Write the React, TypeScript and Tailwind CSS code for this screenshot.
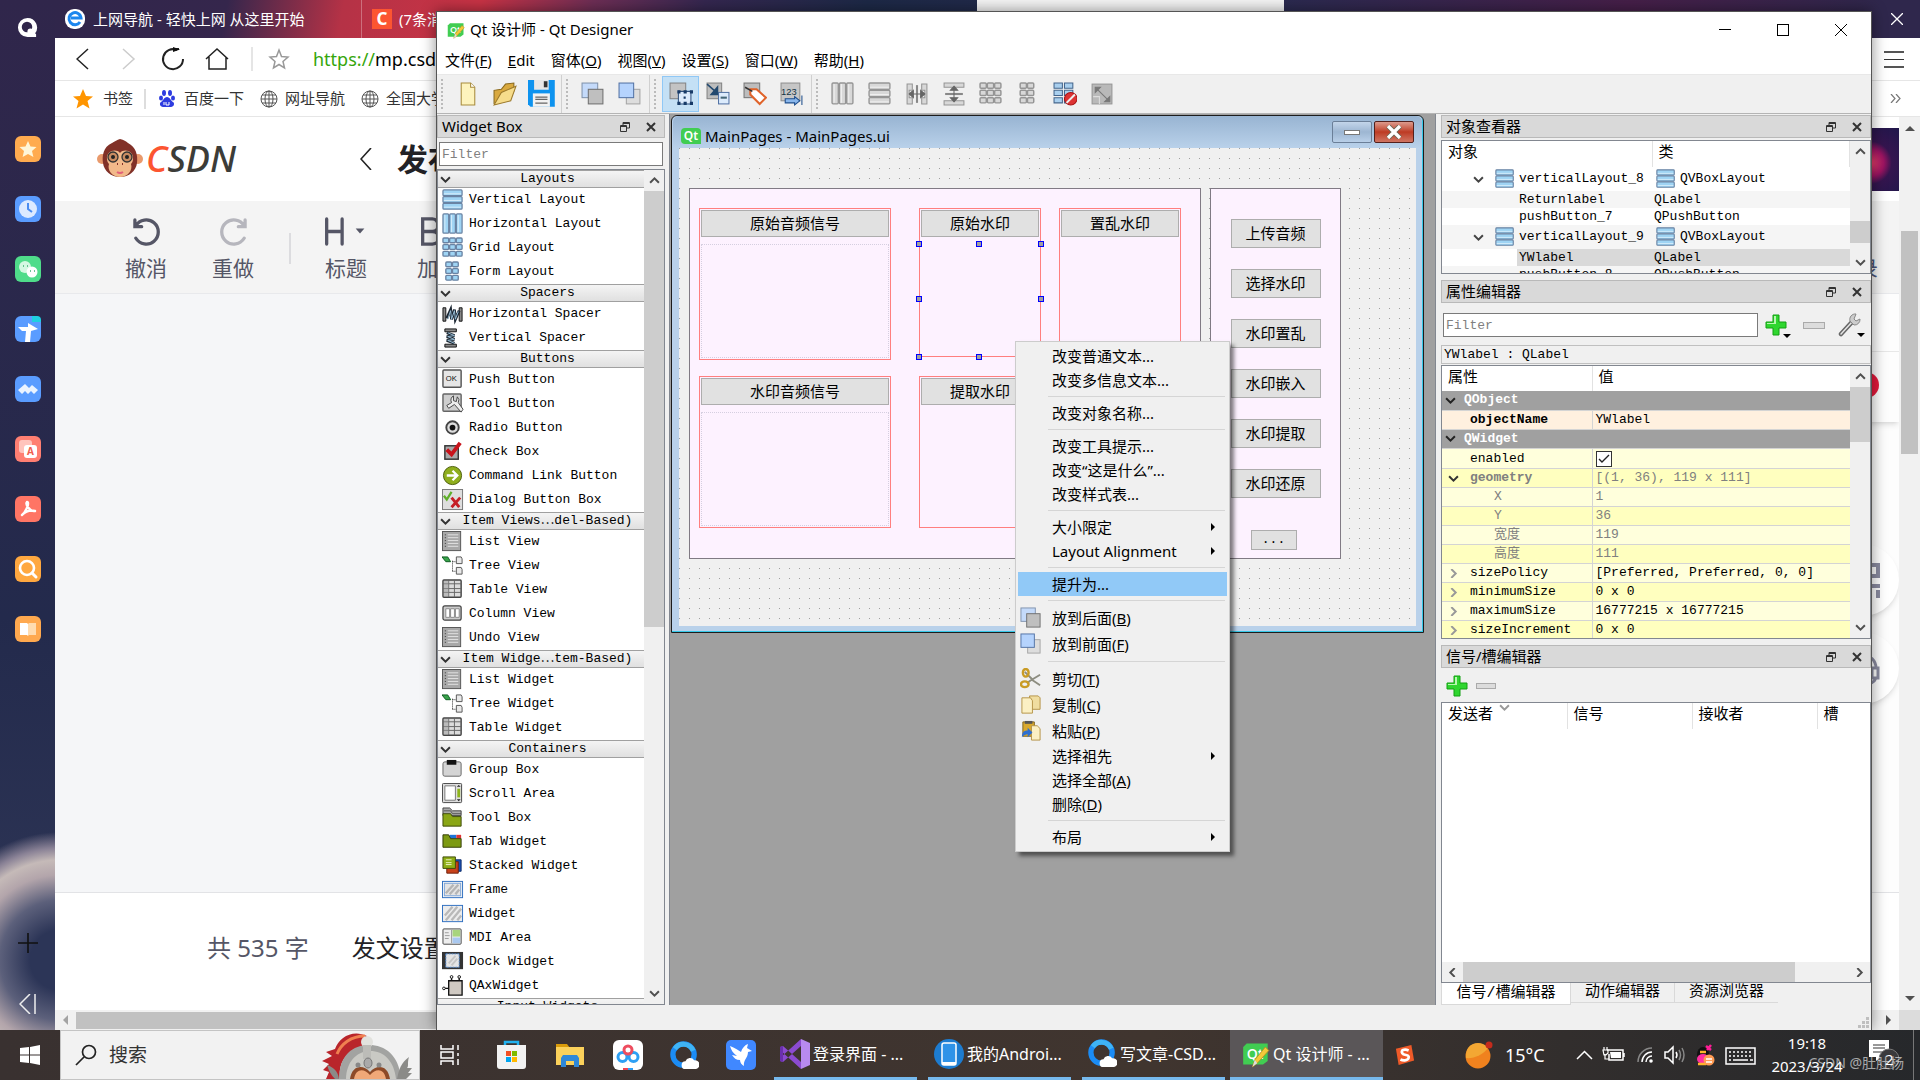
import { type ReactNode } from "react";

const CHEVRON_DOWN = "M1 2 L5 6 L9 2";

interface MenuEntry {
  label: string;
  hotkey?: string;
  icon?: string;
  submenu?: boolean;
  active?: boolean;
}

const contextMenu: MenuEntry[][] = [
  [{ label: "改变普通文本..." }, { label: "改变多信息文本..." }],
  [{ label: "改变对象名称..." }],
  [{ label: "改变工具提示..." }, { label: "改变“这是什么”..." }, { label: "改变样式表..." }],
  [
    { label: "大小限定", submenu: true },
    { label: "Layout Alignment", submenu: true },
  ],
  [{ label: "提升为...", active: true }],
  [
    { label: "放到后面", hotkey: "B", icon: "back" },
    { label: "放到前面", hotkey: "F", icon: "front" },
  ],
  [
    { label: "剪切", hotkey: "T", icon: "cut" },
    { label: "复制", hotkey: "C", icon: "copy" },
    { label: "粘贴", hotkey: "P", icon: "paste" },
    { label: "选择祖先", submenu: true },
    { label: "选择全部", hotkey: "A" },
    { label: "删除", hotkey: "D" },
  ],
  [{ label: "布局", submenu: true }],
];

const widgetGroups = [
  {
    title: "Layouts",
    items: [
      ["vbox", "Vertical Layout"],
      ["hbox", "Horizontal Layout"],
      ["grid", "Grid Layout"],
      ["form", "Form Layout"],
    ],
  },
  {
    title: "Spacers",
    items: [
      ["hspacer", "Horizontal Spacer"],
      ["vspacer", "Vertical Spacer"],
    ],
  },
  {
    title: "Buttons",
    items: [
      ["push", "Push Button"],
      ["tool", "Tool Button"],
      ["radio", "Radio Button"],
      ["check", "Check Box"],
      ["command", "Command Link Button"],
      ["dialog", "Dialog Button Box"],
    ],
  },
  {
    title: "Item Views⋯del-Based)",
    items: [
      ["list", "List View"],
      ["tree", "Tree View"],
      ["table", "Table View"],
      ["column", "Column View"],
      ["list", "Undo View"],
    ],
  },
  {
    title: "Item Widge⋯tem-Based)",
    items: [
      ["list", "List Widget"],
      ["tree", "Tree Widget"],
      ["table", "Table Widget"],
    ],
  },
  {
    title: "Containers",
    items: [
      ["group", "Group Box"],
      ["scroll", "Scroll Area"],
      ["toolbox", "Tool Box"],
      ["tab", "Tab Widget"],
      ["stack", "Stacked Widget"],
      ["frame", "Frame"],
      ["widget", "Widget"],
      ["mdi", "MDI Area"],
      ["dock", "Dock Widget"],
      ["qax", "QAxWidget"],
    ],
  },
  { title: "Input Widgets", items: [] },
];

const menus = [
  ["文件", "F"],
  ["", "Edit"],
  ["窗体", "O"],
  ["视图", "V"],
  ["设置", "S"],
  ["窗口", "W"],
  ["帮助", "H"],
];

const toolbars = [
  { items: ["new", "open", "save"], cls: "w-[125px] pl-3" },
  { items: ["back", "front"], cls: "w-[88px] pl-3" },
  { items: ["editw", "signals", "buddies", "taborder"], cls: "w-[162px] pl-3" },
  { items: ["hgray", "vgray", "hsplit", "vsplit", "ggray", "fgray", "break", "adjust"], cls: "pl-3" },
];

function bars(vertical: boolean, fill: string, stroke: string) {
  return [2, 9, 16].map((p) =>
    vertical ? (
      <g key={p}>
        <rect x={p - 1} y={1} width={6} height={20} rx={1} fill={fill} stroke={stroke} strokeWidth={1.3} />
        <path d={`M${p + 1} 2v18`} stroke="#fff" opacity={0.6} />
      </g>
    ) : (
      <g key={p}>
        <rect x={1} y={p - 1} width={20} height={6} rx={1} fill={fill} stroke={stroke} strokeWidth={1.3} />
        <path d={`M2 ${p + 3}h18`} stroke="#fff" opacity={0.6} />
      </g>
    )
  );
}

function cells(cols: number[], fill: string, stroke: string) {
  return cols.flatMap((x) =>
    [2, 9, 16].map((y) => (
      <rect key={`${x}-${y}`} x={x - 1} y={y - 1} width={6} height={5} rx={1} fill={fill} stroke={stroke} strokeWidth={1.4} />
    ))
  );
}

const BLUE = "#9fd4f4";
const STEEL = "#6a83a3";
const GRAY = "#d8d8d8";
const EDGE = "#959595";

const drawings: Record<string, ReactNode> = {
  vbox: bars(false, BLUE, STEEL),
  hbox: bars(true, BLUE, STEEL),
  grid: cells([2, 9, 16], BLUE, STEEL),
  form: cells([5, 12], BLUE, STEEL),
  hgray: bars(true, GRAY, EDGE),
  vgray: bars(false, GRAY, EDGE),
  ggray: cells([2, 9, 16], GRAY, EDGE),
  fgray: cells([5, 12], GRAY, EDGE),
  hsplit: (
    <>
      <path d="M2 2h5v6H4v7h3v6H2zM21 2h-5v6h3v7h-3v6h5z" fill={GRAY} stroke={EDGE} />
      <path d="M11.5 3v17" stroke="#888" strokeWidth="2" />
      <path d="M4 11.5l4-3.500v7zM19 11.5l-4-3.500v7zM6 11.5h11" fill="#666" stroke="#666" />
    </>
  ),
  vsplit: (
    <>
      <path d="M2 1h19v4H2zM2 18h19v4H2z" fill={GRAY} stroke={EDGE} />
      <path d="M3 11.5h17" stroke="#888" strokeWidth="2" />
      <path d="M11.5 4l3.500 4h-7zM11.5 19l3.500-4h-7zM11.5 6v11" fill="#666" stroke="#666" />
    </>
  ),
  break: (
    <>
      {[1, 8, 15].map((y) => (
        <path key={y} d={`M1 ${y}h8v5H1zM11 ${y}h8v5h-8z`} fill="#a9cfee" stroke="#44658c" />
      ))}
      <circle cx="17" cy="16" r="6" fill="#d33" stroke="#a11" />
      <path d="M13 20l8-8" stroke="#eee" strokeWidth="2" />
    </>
  ),
  adjust: (
    <>
      <rect x="2" y="2" width="19" height="19" fill="#b9b9b9" stroke="#969696" />
      <path d="M3 14h6v7" fill="none" stroke="#ddd" />
      <path d="M5 5h5l-5 5zM19 19h-5l5-5zM7 7l10 10" fill="#777" stroke="#777" />
    </>
  ),
  hspacer: (
    <>
      <path d="M1 5h3v14H1zM18 5h3v14h-3z" fill="#888" stroke="#111" />
      <path d="M5 16l4-9 1 10 3-10 1 10 4-9" fill="none" stroke="#1c2733" strokeWidth="3" />
      <path d="M6 17l3-9 1 9 3-9 1 9 3-8" fill="none" stroke="#9cc2da" />
    </>
  ),
  vspacer: (
    <>
      <path d="M3 2h12v3H3zM3 18h12v3H3z" fill="#888" stroke="#111" />
      <path d="M5 6l8 3-8 1 8 3-8 1 8 3" fill="none" stroke="#1c2733" strokeWidth="3" />
      <path d="M6 6l7 3-7 1 7 3-7 1 7 3" fill="none" stroke="#9cc2da" />
    </>
  ),
  push: (
    <>
      <rect x="1" y="1" width="19" height="18" rx="1" fill="#e6e6e6" stroke="#555" strokeWidth="1.500" />
      <text x="4" y="13" fontSize="8" fontFamily="Liberation Sans" fill="#111">OK</text>
    </>
  ),
  tool: (
    <>
      <rect x="1" y="1" width="19" height="18" rx="1" fill="#cfcfcf" stroke="#666" strokeWidth="1.500" />
      <path d="M12 3a5 5 0 0 0-2 7l-5 3 2 3 6-4 7 8 2-3-5-7a5 5 0 0 0-1-6l-1 5-3-1z" fill="#eee" stroke="#444" />
    </>
  ),
  radio: (
    <>
      <circle cx="11" cy="11" r="6.500" fill="#ddd" stroke="#444" strokeWidth="2" />
      <circle cx="11" cy="11" r="3" fill="#111" />
    </>
  ),
  check: (
    <>
      <rect x="3" y="5" width="14" height="14" fill="#a9a9a9" stroke="#333" strokeWidth="1.500" />
      <path d="M5 9l5 5 9-12" fill="none" stroke="#c8141c" strokeWidth="4" />
    </>
  ),
  command: (
    <>
      <circle cx="11" cy="11" r="9.500" fill="#8fae1d" stroke="#4d5d0d" />
      <path d="M5 11h10M11 6l5 5-5 5" fill="none" stroke="#fff" strokeWidth="2.400" />
    </>
  ),
  dialog: (
    <>
      <rect x="0.500" y="0.500" width="21" height="21" fill="#dedede" stroke="#777" />
      <path d="M2 7l3 4 5-8" fill="none" stroke="#5fae2a" strokeWidth="2.400" />
      <path d="M10 9l8 10M19 9l-9 10" stroke="#c51f26" strokeWidth="3" />
    </>
  ),
  list: (
    <>
      <rect x="0.500" y="0.500" width="19" height="20" fill="#a8a8a8" stroke="#555" />
      <path d="M6 4h11M6 7h11M6 10h11M6 13h11M6 16h11" stroke="#e4e4e4" />
      <path d="M3 4h1M3 7h1M3 10h1M3 13h1M3 16h1" stroke="#333" />
    </>
  ),
  tree: (
    <>
      <path d="M0 2l6 0 3 5-5 0z" fill="#39a34b" stroke="#0d5a20" />
      <path d="M11 6v12M11 7h4M11 17h4" fill="none" stroke="#222" strokeDasharray="1 1" />
      <path d="M15 2h5l1 2v5h-6zM15 13h5l1 2v5h-6z" fill="#e9e9e9" stroke="#555" />
    </>
  ),
  table: (
    <>
      <rect x="1" y="1" width="19" height="18" rx="1" fill="#dcdcdc" stroke="#444" strokeWidth="1.500" />
      <path d="M1 5h19M1 10h19M1 14h19M7 1v18M13 1v18" stroke="#666" />
      <path d="M2 2h5v16H2z" fill="#999" opacity="0.5" />
    </>
  ),
  column: (
    <>
      <rect x="1" y="3" width="19" height="15" rx="2" fill="#ccc" stroke="#444" strokeWidth="1.300" />
      <path d="M4 6h4v9H4zM9 6h4v9H9zM14 6h4v9h-4z" fill="#fff" stroke="#888" />
    </>
  ),
  group: (
    <>
      <rect x="1" y="3" width="19" height="15" rx="2" fill="#d4d4d4" stroke="#666" />
      <path d="M5 1h10v5H5z" fill="#111" />
    </>
  ),
  scroll: (
    <>
      <rect x="0.500" y="0.500" width="20" height="20" rx="1" fill="#ddd" stroke="#444" />
      <path d="M3 3h11v15H3z" fill="#fff" stroke="#777" />
      <path d="M16 6h3v9h-3z" fill="#8fb51d" />
      <path d="M17.500 2l2 2h-4zM17.500 19l2-2h-4z" fill="#222" />
    </>
  ),
  toolbox: (
    <>
      <path d="M1 1h7l3 3h9v5H1z" fill="#aaa" stroke="#444" />
      <path d="M1 7h8l2 3h9v10H1z" fill="#8aa615" stroke="#3e4b09" />
      <path d="M2 4h7l2 3h9" fill="none" stroke="#555" />
    </>
  ),
  tab: (
    <>
      <path d="M8 4h7v4H8z" fill="#1c74d8" />
      <path d="M15 4h5v4h-5z" fill="#d33" />
      <path d="M1 4h6l2 4h11v9H1z" fill="#7d9a12" stroke="#323d07" />
    </>
  ),
  stack: (
    <>
      <path d="M8 5h12v12H8z" fill="#1a4fb4" stroke="#0e2d6b" />
      <path d="M5 7h12v12H5z" fill="#c8421b" stroke="#6d200a" />
      <path d="M1 2h13v12H1z" fill="#8fae17" stroke="#3e4b09" />
      <path d="M4 5h6M4 8h6M4 10h6" stroke="#eef5c6" />
    </>
  ),
  frame: (
    <>
      <rect x="0.500" y="2.500" width="21" height="17" fill="#f4f4f4" stroke="#2f6fc0" />
      <rect x="2.500" y="4.500" width="17" height="13" fill="#e4e4e4" stroke="#7fa6d8" />
      <path d="M4 15l8-9M8 16l9-10M14 16l4-5" stroke="#b4b4b4" strokeWidth="2.400" />
    </>
  ),
  widget: (
    <>
      <rect x="0.500" y="2.500" width="21" height="17" fill="#ececec" stroke="#2f6fc0" />
      <path d="M3 13l8-9M4 18l12-14M10 18l10-12M16 18l4-5" stroke="#b9b9b9" strokeWidth="2.400" />
    </>
  ),
  mdi: (
    <>
      <rect x="1" y="2" width="19" height="16" rx="1" fill="#eee" stroke="#444" />
      <path d="M11 3h8v7h-8z" fill="#a8d47c" />
      <path d="M11 11h8v6h-8z" fill="#a9c8ef" />
      <path d="M3 6h4M3 9h5M3 12h4M10 3v14" stroke="#999" />
    </>
  ),
  dock: (
    <>
      <rect x="0" y="1" width="22" height="18" fill="#333" />
      <rect x="4" y="3" width="14" height="14" fill="#e4e4e4" stroke="#4a84cc" strokeDasharray="2 1" />
      <path d="M7 13l7-8M10 15l6-7" stroke="#c5c5c5" strokeWidth="2" />
    </>
  ),
  qax: (
    <>
      <path d="M7 6h14v15H7z" fill="#cfc9c2" stroke="#111" strokeWidth="1.400" />
      <path d="M10 6V2M18 6V2M7 14H2" stroke="#111" strokeWidth="1.500" />
      <circle cx="10" cy="2" r="1.400" fill="#fff" stroke="#111" />
      <circle cx="18" cy="2" r="1.400" fill="#fff" stroke="#111" />
      <circle cx="2" cy="14" r="1.400" fill="#fff" stroke="#111" />
    </>
  ),
  new: (
    <>
      <path d="M5 1h9l4 4v17H5z" fill="#fdf3bd" stroke="#a88b3c" />
      <path d="M14 1v4h4" fill="#fff" stroke="#a88b3c" />
    </>
  ),
  open: (
    <>
      <path d="M1 21V8l7-1 4-5 8-1v8" fill="#d9a93f" stroke="#8a6a1f" />
      <path d="M1 22L8 10l14-6-5 14z" fill="#f6dc8b" stroke="#9c7a2c" />
    </>
  ),
  save: (
    <>
      <path d="M0 0h22v22H2l-2-2z" fill="#0e93ef" />
      <path d="M5 0h12v8H5z" fill="#e7e7e7" />
      <path d="M13 1h3v5h-3z" fill="#333" />
      <path d="M4 11h14v11H4z" fill="#f2f2f2" />
      <path d="M6 14h10M6 16h10M6 19h10" stroke="#666" />
    </>
  ),
  back: (
    <>
      <rect x="1" y="1" width="15" height="14" fill="#c4dafa" stroke="#8093ad" />
      <rect x="7" y="7" width="14" height="14" fill="#bfbfbf" stroke="#707070" />
    </>
  ),
  front: (
    <>
      <rect x="8" y="7" width="13" height="14" fill="#ddd" stroke="#a5a5a5" />
      <rect x="1" y="1" width="14" height="14" fill="#b5d3fd" stroke="#5473a5" />
    </>
  ),
  editw: (
    <>
      <rect x="1" y="1" width="15" height="15" fill="#c3c3c3" stroke="#848484" />
      <path d="M9 9h12v12H9z" fill="#dcebfc" stroke="#31537f" />
      <path d="M8 8h3v3H8zM20 8h3v3h-3zM8 19h3v3H8zM20 19h3v3h-3zM14 8h3v3h-3zM14 14h2v2h-2zM14 19h3v3h-3z" fill="#173a67" />
    </>
  ),
  signals: (
    <>
      <rect x="1" y="1" width="14" height="15" fill="#bdbdbd" stroke="#848484" />
      <rect x="12" y="10" width="10" height="11" fill="#dcebfc" stroke="#5473a5" />
      <path d="M14 15h6" stroke="#467" strokeWidth="2" />
      <path d="M1 2l9 8M11 5v7H5z" fill="#23496f" stroke="#23496f" strokeWidth="1.500" />
    </>
  ),
  buddies: (
    <>
      <rect x="1" y="1" width="15" height="14" fill="#bdbdbd" stroke="#777" />
      <path d="M7 7h6l9 8-6 6-9-9z" fill="#fff" stroke="#e0632a" strokeWidth="2" />
      <path d="M2 5l7 4" stroke="#333" strokeWidth="1.500" />
    </>
  ),
  taborder: (
    <>
      <rect x="1" y="1" width="18" height="17" fill="#c6c6c6" stroke="#909090" />
      <text x="1" y="12" fontSize="9" fontFamily="Liberation Sans" fill="#134">123</text>
      <path d="M5 16h9v-2l5 4-5 4v-2H5zM21 13v9" fill="#8ab7ec" stroke="#1d4d8c" />
    </>
  ),
  cut: (
    <>
      <path d="M5 4l8 8M21 7l-10 6-4 3M21 18l-9-6" stroke="#8d8d80" strokeWidth="2" />
      <ellipse cx="6" cy="5" rx="3" ry="4" fill="none" stroke="#c99b24" strokeWidth="2.500" />
      <ellipse cx="5" cy="17" rx="4" ry="3" fill="none" stroke="#c99b24" strokeWidth="2.500" />
    </>
  ),
  copy: (
    <>
      <path d="M10 2h9l2 2v12H10z" fill="#f0dda0" stroke="#b59347" />
      <path d="M2 4h9l2 3v13H2z" fill="#fbf0c4" stroke="#b59347" />
    </>
  ),
  paste: (
    <>
      <path d="M3 2h12v15H3z" fill="#d9a92d" stroke="#7e6320" />
      <path d="M5 1h8v3H5z" fill="#555" />
      <path d="M12 6h6l3 3v12h-9z" fill="#fbf0c4" stroke="#b59347" />
      <path d="M2 18c0-6 3-7 6-7V8l5 5-5 5v-3c-2 0-4 1-6 3z" fill="#2e6fd0" />
    </>
  ),
};

function Icon({ name, size = "size-[22px]" }: { name: string; size?: string }) {
  return (
    <svg viewBox="0 0 23 23" className={`${size} shrink-0`} fill="none" aria-hidden="true">
      {drawings[name]}
    </svg>
  );
}

function Chevron({ className = "", d = CHEVRON_DOWN }: { className?: string; d?: string }) {
  return (
    <svg viewBox="0 0 10 8" className={`w-[11px] h-[9px] shrink-0 ${className}`} fill="none" stroke="currentColor" strokeWidth="1.800" aria-hidden="true">
      <path d={d} />
    </svg>
  );
}

function VScroll({ thumb }: { thumb: string }) {
  return (
    <div className="w-[20px] shrink-0 bg-[#f0f0f0] flex flex-col items-center text-[#505050]">
      <div className="h-[21px] flex items-center">
        <Chevron d="M1 6 L5 2 L9 6" />
      </div>
      <div className="flex-1 w-full flex flex-col">
        <div className={`w-full bg-[#cdcdcd] ${thumb}`} />
      </div>
      <div className="h-[21px] flex items-center">
        <Chevron />
      </div>
    </div>
  );
}

function DockTitle({ title }: { title: string }) {
  return (
    <div className="h-[23px] shrink-0 flex items-center bg-[#d9d9d9] border border-[#b9b9b9] pl-1 pr-2 text-[15px]">
      <h2 className="flex-1 [font-family:'Noto_Sans','Noto_Sans_CJK_SC',sans-serif]">{title}</h2>
      <button aria-label="浮动" className="mr-4">
        <svg viewBox="0 0 10 10" className="size-[10px]" fill="none" stroke="#333">
          <path d="M3 3V0.500h6.500V6H7M3 1.500h6" />
          <path d="M0.500 3.500h6v6h-6zM0.500 4.500h6" />
        </svg>
      </button>
      <button aria-label="关闭">
        <svg viewBox="0 0 10 10" className="size-[10px]" stroke="#333" strokeWidth="2">
          <path d="M1 1l8 8M9 1l-8 8" />
        </svg>
      </button>
    </div>
  );
}

function WidgetBox() {
  return (
    <aside className="w-[228px] shrink-0 flex flex-col pt-px">
      <DockTitle title="Widget Box" />
      <input
        aria-label="Filter widgets"
        placeholder="Filter"
        className="mx-0.5 mt-1 h-6 shrink-0 border border-[#7a7a7a] bg-white px-0.5 placeholder:text-[#808080] text-[13px] [font-family:'Liberation_Mono',monospace]"
      />
      <div className="mt-[3px] flex-1 min-h-0 flex border border-[#828790] bg-white overflow-hidden">
        <div className="flex-1 overflow-hidden text-[13px] [font-family:'Liberation_Mono','Noto_Sans_CJK_SC',monospace]">
          {widgetGroups.map((g) => (
            <section key={g.title}>
              <h3 className="h-[18px] leading-4 flex items-center border-y border-[#a0a0a0] bg-linear-to-b from-[#f4f4f4] to-[#e0e0e0] pl-0.5">
                <Chevron className="text-[#333]" />
                <span className="flex-1 text-center whitespace-nowrap">{g.title}</span>
              </h3>
              <ul>
                {g.items.map(([icon, label]) => (
                  <li key={label} className="h-6 flex items-center gap-[5px] pl-1">
                    <Icon name={icon} />
                    {label}
                  </li>
                ))}
              </ul>
            </section>
          ))}
        </div>
        <VScroll thumb="h-[55%]" />
      </div>
    </aside>
  );
}

function LayoutBox({ title, className, dotted, children }: { title: string; className: string; dotted?: boolean; children?: ReactNode }) {
  return (
    <div className={`relative flex flex-col border border-[#ff7f7f] p-px ${className}`}>
      <button className="h-[27px] shrink-0 bg-[#e1e1e1] border border-[#adadad]">{title}</button>
      {dotted && <div className="mt-[7px] flex-1 border border-dotted border-[#d5cfe0]" />}
      {children}
    </div>
  );
}

// selection grips of the active label
const grips = [
  "-left-1 top-8",
  "left-14 top-8",
  "-right-1 top-8",
  "-left-1 top-[87px]",
  "-right-1 top-[87px]",
  "-left-1 -bottom-1",
  "left-14 -bottom-1",
];

function FormWindow() {
  return (
    <div className="w-[753px] h-[518px] flex flex-col rounded-t-md border border-[#1c1c1c] bg-[#b9d1ea] p-px pt-0 shadow-[inset_-1px_-1px_0_#35c8e8]">
      <div className="h-[32px] shrink-0 flex items-center gap-1 px-2 bg-linear-to-b from-[#98b4d2] to-[#b9d1ea] rounded-t-md text-[15px]">
        <span className="mt-2 w-5 h-4 rounded-sm rounded-br-none bg-[#41cd52] text-white text-[12px] leading-4 text-center font-semibold">Qt</span>
        <span className="mt-2 flex-1">MainPages - MainPages.ui</span>
        <div className="flex gap-0.5">
          <button aria-label="最小化" className="w-10 h-[22px] rounded-xs border border-[#6b7f98] bg-linear-to-b from-[#c3d5ea] via-[#9db6d2] to-[#b9cfe8] flex items-center justify-center">
            <span className="w-4 h-[5px] bg-white border border-[#777]" />
          </button>
          <button aria-label="关闭窗体" className="w-10 h-[22px] rounded-xs border border-[#54201c] bg-linear-to-b from-[#dc9a8d] via-[#bd3a23] to-[#cf7462] flex items-center justify-center">
            <svg viewBox="0 0 16 14" className="w-4 h-3.5">
              <path d="M2 1l12 12M14 1L2 13" stroke="#665" strokeWidth="5" />
              <path d="M2 1l12 12M14 1L2 13" stroke="#fff" strokeWidth="3.400" />
            </svg>
          </button>
        </div>
      </div>
      <div className="mx-[6px] mb-[5px] flex-1 bg-[#f0f0f0] bg-[conic-gradient(from_270deg_at_1px_1px,#a0a0a0_90deg,transparent_90deg)] bg-size-[10px_10px] pl-[10px] pt-10 flex items-start gap-[9px] text-[15px]">
        <div className="w-[512px] h-[371px] bg-[#fdf2ff] border border-[#807a84] pl-[9px] pt-[19px] grid grid-cols-[220px_140px_122px] grid-rows-[152px_152px] gap-y-4 content-start">
          <LayoutBox title="原始音频信号" dotted className="w-[192px]" />
          <LayoutBox title="原始水印" className="w-[122px] h-[149px]">
            {grips.map((g) => (
              <span key={g} className={`absolute size-[6px] border border-[#0000ff] bg-[#a0a0a0] ${g}`} />
            ))}
          </LayoutBox>
          <LayoutBox title="置乱水印" className="w-[122px] h-[149px]" />
          <LayoutBox title="水印音频信号" dotted className="w-[192px]" />
          <LayoutBox title="提取水印" className="w-[122px] h-[152px]" />
        </div>
        <div className="w-[131px] h-[371px] bg-[#fdf2ff] border border-[#807a84] pt-[30px] flex flex-col items-center gap-[21px]">
          {["上传音频", "选择水印", "水印置乱", "水印嵌入", "水印提取", "水印还原"].map((label) => (
            <button key={label} className="w-[90px] h-[29px] bg-[#e1e1e1] border border-[#adadad]">
              {label}
            </button>
          ))}
          <button className="mt-[11px] mr-1 w-[46px] h-5 leading-3 bg-[#e1e1e1] border border-[#adadad] [font-family:'Liberation_Mono',monospace] text-[13px]">
            ...
          </button>
        </div>
      </div>
    </div>
  );
}

const objects = [
  { name: "verticalLayout_8", cls: "QVBoxLayout", layout: true },
  { name: "Returnlabel", cls: "QLabel" },
  { name: "pushButton_7", cls: "QPushButton" },
  { name: "verticalLayout_9", cls: "QVBoxLayout", layout: true },
  { name: "YWlabel", cls: "QLabel", selected: true },
  { name: "pushButton_8", cls: "QPushButton" },
];

function ObjectInspector() {
  return (
    <section className="flex flex-col">
      <DockTitle title="对象查看器" />
      <div className="mt-0.5 h-[134px] flex border border-[#828790] bg-white overflow-hidden">
        <div className="flex-1 overflow-hidden">
          <table className="w-full table-fixed border-collapse text-[13px] leading-4">
            <colgroup>
              <col className="w-[210px]" />
              <col />
            </colgroup>
            <thead className="text-[15px]">
              <tr className="h-[26px]">
                <th className="text-left font-normal pl-1.5 pb-0 border-r border-[#e2e2e2]">对象</th>
                <th className="text-left font-normal pl-1.5 pb-0 border-r border-[#e2e2e2]">类</th>
              </tr>
            </thead>
            <tbody>
              {objects.map((o, i) => (
                <tr key={o.name} className={`${o.layout ? "h-6" : "h-[17px]"} ${i % 2 ? "bg-[#f5f5f5]" : ""}`}>
                  <td className="p-0">
                    {o.layout ? (
                      <span className="flex items-center pl-[31px]">
                        <Chevron className="text-[#444] mr-[11px]" />
                        <Icon name="vbox" size="size-[20px]" />
                        <span className="pl-1">{o.name}</span>
                      </span>
                    ) : (
                      <span className={`block leading-[17px] ml-[75px] pl-0.5 ${o.selected ? "bg-[#d9d9d9]" : ""}`}>{o.name}</span>
                    )}
                  </td>
                  <td className={`p-0 ${o.selected ? "bg-[#d9d9d9]" : ""}`}>
                    {o.layout ? (
                      <span className="flex items-center pl-1">
                        <Icon name="vbox" size="size-[20px]" />
                        <span className="pl-1">{o.cls}</span>
                      </span>
                    ) : (
                      <span className="pl-0.5">{o.cls}</span>
                    )}
                  </td>
                </tr>
              ))}
            </tbody>
          </table>
        </div>
        <VScroll thumb="mt-[59px] h-[22px]" />
      </div>
    </section>
  );
}

const properties = [
  { name: "objectName", value: "YWlabel", bg: "bg-[#fff0df]", strong: true },
  { name: "QWidget", group: true },
  { name: "enabled", value: "", bg: "bg-[#ffffdc]", checkbox: true },
  { name: "geometry", value: "[(1, 36), 119 x 111]", bg: "bg-[#ffffbf]", strong: true, dim: true, open: true },
  { name: "X", value: "1", bg: "bg-[#ffffdc]", dim: true, child: true },
  { name: "Y", value: "36", bg: "bg-[#ffffbf]", dim: true, child: true },
  { name: "宽度", value: "119", bg: "bg-[#ffffdc]", dim: true, child: true },
  { name: "高度", value: "111", bg: "bg-[#ffffbf]", dim: true, child: true },
  { name: "sizePolicy", value: "[Preferred, Preferred, 0, 0]", bg: "bg-[#ffffdc]", closed: true },
  { name: "minimumSize", value: "0 x 0", bg: "bg-[#ffffbf]", closed: true },
  { name: "maximumSize", value: "16777215 x 16777215", bg: "bg-[#ffffdc]", closed: true },
  { name: "sizeIncrement", value: "0 x 0", bg: "bg-[#ffffbf]", closed: true },
];

function GroupRow({ name }: { name: string }) {
  return (
    <tr className="h-[19px] bg-[#a0a0a0] text-white">
      <td colSpan={2} className="p-0 pl-[3px] border-b border-[#d4d4d4]">
        <span className="flex items-center gap-2 font-bold">
          <Chevron className="text-[#222]" />
          {name}
        </span>
      </td>
    </tr>
  );
}

function PlusIcon({ className }: { className: string }) {
  return (
    <svg viewBox="0 0 22 22" className={className}>
      <path d="M8 1h6v7h7v6h-7v7H8v-7H1V8h7z" fill="#2fd62f" stroke="#12a012" />
      <path d="M9 2h2v8H2V9h7z" fill="#b8f7b0" />
    </svg>
  );
}

function PropertyEditor() {
  return (
    <section className="mt-[6px] flex flex-col">
      <DockTitle title="属性编辑器" />
      <div className="mt-[10px] h-6 flex items-center pl-0.5">
        <input
          aria-label="Filter properties"
          placeholder="Filter"
          className="w-[315px] h-6 border border-[#7a7a7a] bg-white px-0.5 placeholder:text-[#808080] text-[13px]"
        />
        <button aria-label="添加动态属性" className="ml-[7px] flex items-end">
          <PlusIcon className="size-[22px]" />
          <span className="-ml-1 -mb-0.5 border-x-4 border-x-transparent border-t-4 border-t-black" />
        </button>
        <button aria-label="删除动态属性" className="ml-3 w-[22px] h-[7px] border border-[#aaa] bg-[#dcdcdc]" />
        <button aria-label="设置属性编辑器" className="ml-3 flex items-end">
          <svg viewBox="0 0 24 24" className="size-6">
            <path d="M4 21L15 9" stroke="#666" strokeWidth="4.500" strokeLinecap="round" />
            <path d="M4 21L15 9" stroke="#e4e4e4" strokeWidth="1.500" strokeLinecap="round" />
            <path d="M19 1a5.500 5.500 0 0 0-6 7l4 4a5.500 5.500 0 0 0 6-6l-4 2-2-2z" fill="#ccc" stroke="#888" />
          </svg>
          <span className="-ml-1 border-x-4 border-x-transparent border-t-4 border-t-black" />
        </button>
      </div>
      <p className="mt-2 h-[19px] leading-[18px] border border-[#c0c0c0] pl-0.5 text-[13px]">YWlabel : QLabel</p>
      <div className="mt-px h-[274px] flex border border-[#828790] bg-white overflow-hidden">
        <div className="flex-1 overflow-hidden">
          <table className="w-full table-fixed border-collapse text-[13px] leading-4">
            <colgroup>
              <col className="w-[150px]" />
              <col />
            </colgroup>
            <thead className="text-[15px]">
              <tr className="h-[25px]">
                <th className="text-left font-normal pl-1.5 pb-0 border-r border-[#e2e2e2]">属性</th>
                <th className="text-left font-normal pl-1.5 pb-0">值</th>
              </tr>
            </thead>
            <tbody>
              <GroupRow name="QObject" />
              {properties.map((p) =>
                p.group ? (
                  <GroupRow key={p.name} name={p.name} />
                ) : (
                  <tr key={p.name} className={`${p.checkbox ? "h-5" : "h-[19px]"} ${p.bg} ${p.dim ? "text-[#808080]" : ""}`}>
                    <td className="p-0 pt-px border-b border-r border-[#d4d4d4]">
                      <span className="flex items-center">
                        <span className="w-[28px] pl-[6px] shrink-0">
                          {p.open && <Chevron className="text-[#333]" />}
                          {p.closed && <Chevron className="text-[#999]" d="M3 0 L7 4 L3 8" />}
                        </span>
                        <span className={`${p.strong ? "font-bold" : ""} ${p.child ? "pl-6" : ""}`}>{p.name}</span>
                      </span>
                    </td>
                    <td className="p-0 pt-px pl-[3px] border-b border-[#d4d4d4]">
                      {p.checkbox ? (
                        <label className="relative flex items-center">
                          <input type="checkbox" defaultChecked aria-label="enabled" className="peer appearance-none size-4 border border-[#333] bg-white" />
                          <svg viewBox="0 0 16 16" className="absolute left-0 top-0 size-4 hidden peer-checked:block" fill="none" stroke="#222" strokeWidth="1.400">
                            <path d="M3 8l3 3 7-7" />
                          </svg>
                        </label>
                      ) : (
                        p.value
                      )}
                    </td>
                  </tr>
                )
              )}
            </tbody>
          </table>
        </div>
        <VScroll thumb="h-[55px]" />
      </div>
    </section>
  );
}

function SignalEditor() {
  return (
    <section className="mt-[6px] flex-1 min-h-0 flex flex-col">
      <DockTitle title="信号/槽编辑器" />
      <div className="h-[34px] shrink-0 flex items-center gap-2 pl-[5px] pt-0.5">
        <button aria-label="添加">
          <PlusIcon className="size-[22px]" />
        </button>
        <button aria-label="删除" className="w-[20px] h-[6px] border border-[#aaa] bg-[#dcdcdc]" />
      </div>
      <div className="flex-1 min-h-0 flex flex-col border border-[#828790] bg-white">
        <table className="w-full table-fixed border-collapse text-[15px]">
          <colgroup>
            <col className="w-[125px]" />
            <col className="w-[125px]" />
            <col className="w-[125px]" />
            <col />
          </colgroup>
          <thead>
            <tr className="h-[26px]">
              {["发送者", "信号", "接收者", "槽"].map((h, i) => (
                <th key={h} className="relative text-left font-normal p-0 pt-px pl-1.5 border-r last:border-r-0 border-[#e2e2e2]">
                  {h}
                  {i === 0 && <Chevron className="absolute left-[57px] top-0 text-[#999]" />}
                </th>
              ))}
            </tr>
          </thead>
        </table>
        <div className="mt-auto h-[20px] flex items-center bg-[#f0f0f0] text-[#505050]">
          <span className="w-[21px] flex justify-center">
            <Chevron d="M7 0 L3 4 L7 8" />
          </span>
          <span className="flex-1 h-full">
            <span className="block h-full w-[86%] bg-[#cdcdcd]" />
          </span>
          <span className="w-[21px] flex justify-center">
            <Chevron d="M3 0 L7 4 L3 8" />
          </span>
        </div>
      </div>
      <div className="h-[22px] shrink-0 flex items-start text-[15px] leading-5">
        <button className="w-[130px] h-[22px] bg-white border border-t-0 border-[#d9d9d9]">信号/槽编辑器</button>
        <button className="w-[104px] h-5 border-r border-b border-[#d9d9d9]">动作编辑器</button>
        <button className="w-[103px] h-5 border-b border-[#d9d9d9]">资源浏览器</button>
      </div>
    </section>
  );
}

function QtLogo({ className }: { className: string }) {
  return (
    <svg viewBox="0 0 24 24" className={className}>
      <path d="M4 3h18v15l-4 3H1V6z" fill="#41cd52" />
      <text x="4" y="16" fontSize="12" fontFamily="Open Sans" fontWeight="600" fill="#fff">Qt</text>
      <path d="M9 23l2-6L20 6l3 3L13 20z" fill="#f5c93a" stroke="#b98a1c" strokeWidth="0.700" />
      <path d="M9 23l2-6 2 3z" fill="#ddd" />
    </svg>
  );
}

function QtDesigner() {
  return (
    <div className="absolute left-[436px] right-[48px] top-[11px] bottom-0 flex flex-col bg-[#f0f0f0] border-l border-t border-r border-[#555] shadow-[0_0_14px_rgba(0,0,0,0.45)] text-black">
      <header className="h-[35px] shrink-0 bg-white flex items-center pl-[10px] text-[15px]">
        <QtLogo className="size-[18px]" />
        <h1 className="flex-1 pl-[5px]">Qt 设计师 - Qt Designer</h1>
        <div className="flex items-center pr-[24px] gap-[46px]">
          <button aria-label="Minimize" className="w-3 h-px bg-black" />
          <button aria-label="Maximize" className="size-3 border border-black" />
          <button aria-label="Close">
            <svg viewBox="0 0 12 12" className="size-3" stroke="#000">
              <path d="M0 0l12 12M12 0L0 12" />
            </svg>
          </button>
        </div>
      </header>
      <nav className="h-[28px] shrink-0 bg-white border-b border-[#e8e8e8] flex items-center pl-[8px] gap-4 text-[15px]">
        {menus.map(([label, key]) => (
          <button key={key}>
            {label ? (
              <>
                {label}(<u>{key}</u>)
              </>
            ) : (
              <>
                <u>E</u>dit
              </>
            )}
          </button>
        ))}
      </nav>
      <div className="h-[39px] shrink-0 border-b border-[#b4b4b4] flex items-stretch">
        {toolbars.map((t) => (
          <div key={t.items[0]} className={`relative flex items-center border-r border-[#d0d0d0] last:border-r-0 ${t.cls}`}>
            <span className="absolute left-1 top-1 bottom-1 border-l-2 border-dotted border-[#bbb]" />
            {t.items.map((name) => (
              <button
                key={name}
                aria-label={name}
                className={`w-[37px] h-9 flex items-center justify-center border ${name === "editw" ? "bg-[#c4e0f5] border-[#90c8f6]" : "border-transparent"}`}
              >
                <Icon name={name} size={name === "save" ? "size-7" : "size-6"} />
              </button>
            ))}
          </div>
        ))}
      </div>
      <div className="flex-1 min-h-0 flex">
        <WidgetBox />
        <main className="ml-1 flex-1 min-w-0 bg-[#a0a0a0] border-l border-r border-[#828790] pl-px pt-px overflow-hidden">
          <FormWindow />
        </main>
        <aside className="ml-[5px] w-[430px] shrink-0 flex flex-col pt-px [&_section>div]:[font-family:'Liberation_Mono','Noto_Sans_CJK_SC',monospace] [&_section>p]:[font-family:'Liberation_Mono',monospace]">
          <ObjectInspector />
          <PropertyEditor />
          <SignalEditor />
        </aside>
      </div>
      <footer className="h-[25px] shrink-0 flex items-end justify-end pr-[2px] pb-[2px]">
        <svg viewBox="0 0 11 11" className="size-[11px]" fill="#bfbfbf">
          <path d="M8 0h3v3H8zM4 4h3v3H4zM8 4h3v3H8zM0 8h3v3H0zM4 8h3v3H4zM8 8h3v3H8z" />
        </svg>
      </footer>
    </div>
  );
}

function ContextMenu() {
  return (
    <div role="menu" className="absolute left-[1015px] top-[341px] w-[215px] bg-[#f0f0f0] border border-[#ccc] p-0.5 shadow-[4px_4px_4px_rgba(0,0,0,0.5)] text-[15px] text-black">
      {contextMenu.map((group, i) => (
        <div key={group[0].label}>
          {i > 0 && <hr className="ml-[30px] mr-0.5 my-1 border-[#d5d5d5]" />}
          {group.map((m) => (
            <button
              key={m.label}
              role="menuitem"
              className={`w-full flex items-center text-left pr-1.5 ${m.icon ? "h-[26px]" : "h-6"} ${m.active ? "bg-[#91c9f7]" : ""}`}
            >
              <span className="w-[34px] pl-0.5">{m.icon && <Icon name={m.icon} />}</span>
              <span className="flex-1">
                {m.label}
                {m.hotkey && (
                  <>
                    (<u>{m.hotkey}</u>)
                  </>
                )}
              </span>
              {m.submenu && <span className="mr-1.5 border-y-4 border-y-transparent border-l-4 border-l-black" />}
            </button>
          ))}
        </div>
      ))}
    </div>
  );
}

const sideApps: { label: string; bg: string; art: ReactNode }[] = [
  { label: "收藏", bg: "bg-[#ffab4f]", art: <path d="M13 5l2.500 5.500 6 .6-4.500 4 1.400 6L13 18l-5.400 3 1.400-6-4.500-4 6-.6z" fill="#fff6d8" /> },
  { label: "历史", bg: "bg-[#5a9cff]", art: (<><circle cx="13" cy="13" r="9" fill="#dceaff" /><path d="M13 7v6l4 3" stroke="#4a8cf0" strokeWidth="2" fill="none" /></>) },
  { label: "微信", bg: "bg-[#4fdc8a]", art: (<><circle cx="10" cy="11" r="6" fill="#d4f8e2" /><circle cx="17" cy="16" r="5.500" fill="#fff" /><path d="M8 10h1M12 10h1M15 15h1M19 15h1" stroke="#3cb371" strokeWidth="1.500" /></>) },
  { label: "导航", bg: "bg-[#5a9cff]", art: (<><path d="M17 0h5a4 4 0 0 1 4 4v2h-9z" fill="#1fd0e0" /><path d="M3 11h10V7l10 6-7 2-1 11h-5l1-11H7z" fill="#fff" /></>) },
  { label: "文档", bg: "bg-[#5a9cff]", art: <path d="M3 14l7-6 4 4 3-3 6 5-4 4-3-3-3 3-3-3-3 3z" fill="#eaf3ff" /> },
  { label: "翻译", bg: "bg-[#ff7f72]", art: (<><rect x="4" y="4" width="13" height="13" rx="3" fill="#ffc4bc" /><rect x="9" y="9" width="13" height="13" rx="3" fill="#fff" /><text x="12" y="19" fontSize="10" fontWeight="700" fill="#f0604f" fontFamily="Open Sans">A</text></>) },
  { label: "PDF", bg: "bg-[#ff7565]", art: <path d="M12 6c3 0-1 10-5 13M12 6c-2 2 3 10 8 9M7 19c4-4 9-5 13-4" stroke="#fff" strokeWidth="2.400" fill="none" strokeLinecap="round" /> },
  { label: "搜索", bg: "bg-[#ffa840]", art: (<><circle cx="12" cy="12" r="7" fill="none" stroke="#fff" strokeWidth="2.600" /><path d="M17 17l4 4" stroke="#fff" strokeWidth="3" strokeLinecap="round" /></>) },
  { label: "阅读", bg: "bg-[#ffa94f]", art: (<><path d="M5 7h7l1 1v12l-1-1H5z" fill="#fff" /><path d="M21 7h-7l-1 1v12l1-1h7z" fill="#ffdcb0" /></>) },
];

function Sidebar() {
  return (
    <aside className="w-[55px] shrink-0 flex flex-col items-center bg-linear-to-b from-[#30264b] via-[#232a4c] via-60% to-[#303858] relative overflow-hidden">
      <div className="absolute inset-x-0 bottom-0 h-[200px] bg-[radial-gradient(circle_at_60px_130px,#2c3557_30px,#5c607b_60px,#b3a5ab_85px,#c5bab8_100px,#8a8296_112px,transparent_128px)]" />
      <svg viewBox="0 0 22 22" className="mt-[17px] size-[21px] shrink-0">
        <path d="M11 1a10 10 0 1 0 0 20h9v-3l-1-1A10 10 0 0 0 11 1z" fill="#fff" />
        <circle cx="10.500" cy="10.500" r="5.500" fill="#30264b" />
        <circle cx="14" cy="15" r="3" fill="#fff" />
      </svg>
      <div className="mt-[98px] flex flex-col gap-[34px]">
        {sideApps.map((a) => (
          <button key={a.label} aria-label={a.label} className={`size-[26px] rounded-md ${a.bg}`}>
            <svg viewBox="0 0 26 26" className="size-[26px]">{a.art}</svg>
          </button>
        ))}
      </div>
      <button aria-label="添加应用" className="relative mt-auto mb-[41px]">
        <svg viewBox="0 0 20 20" className="size-5" stroke="#111" strokeWidth="1.600">
          <path d="M10 0v20M0 10h20" />
        </svg>
      </button>
      <button aria-label="收起" className="relative mb-4">
        <svg viewBox="0 0 18 20" className="w-[18px] h-5" stroke="#eee" strokeWidth="1.500" fill="none">
          <path d="M11 0L1 10l10 10M16 0v20" />
        </svg>
      </button>
    </aside>
  );
}

function Globe() {
  return (
    <svg viewBox="0 0 18 18" className="size-[18px]" fill="none" stroke="#555">
      <circle cx="9" cy="9" r="8" />
      <ellipse cx="9" cy="9" rx="4" ry="8" />
      <path d="M9 1v16M2 5h14M1 9h16M2 13h14" />
    </svg>
  );
}

function Browser() {
  return (
    <div className="flex-1 min-w-0 flex flex-col bg-[#f5f6f8]">
      <div className="h-[38px] shrink-0 flex items-center text-white text-[15px] whitespace-nowrap overflow-hidden bg-[linear-gradient(100deg,#30264b_0px,#35264c_170px,#b53246_285px,#c93345_420px,#6e2e55_530px,#352750_640px,#1d2947_800px,#2a2a50_1200px,#461f49_1550px,#2f274c_1800px)]">
        <svg viewBox="0 0 20 20" className="ml-2.5 size-5 shrink-0">
          <rect width="20" height="20" rx="9" fill="#fff" />
          <path d="M15 13a6 6 0 1 1 1-4H6" fill="none" stroke="#1c86ee" strokeWidth="3" />
        </svg>
        <span className="w-[276px] pl-2">上网导航 - 轻快上网 从这里开始</span>
        <span className="h-full border-l border-white/30 pl-[10px] flex items-center gap-[7px] w-[560px]">
          <span className="size-5 bg-[#fc5531] text-center font-bold text-[17px] leading-5">C</span>
          (7条消息)
        </span>
        <span className="w-[307px] h-full bg-[#f5f5f5] ml-[56px]" />
        <button aria-label="关闭浏览器" className="ml-auto mr-[17px]">
          <svg viewBox="0 0 12 12" className="size-3" stroke="#fff" strokeWidth="1.300">
            <path d="M0 0l12 12M12 0L0 12" />
          </svg>
        </button>
      </div>
      <div className="h-[43px] shrink-0 bg-white border-b border-[#e6e6e6] flex items-center pl-[21px] text-[18px]">
        <svg viewBox="0 0 216 24" className="w-[216px] h-6 shrink-0" fill="none" stroke="#222" strokeWidth="1.500">
          <path d="M12 2L1 12l11 10" />
          <path d="M47 2l11 10-11 10" stroke="#ccc" />
          <path d="M101 3a10 10 0 1 0 6 9M97 2h6" strokeWidth="2" />
          <path d="M97 0l7 2.500-7 2.500z" fill="#111" stroke="none" />
          <path d="M130 12l11-10 11 10M133 10v12h17V10" />
          <path d="M176 0v24" stroke="#ddd" />
          <path d="M203 3l2.500 6.500 6.500.5-5 4.500 1.500 6.500-5.500-3.500-5.500 3.500 1.500-6.500-5-4.500 6.500-.5z" stroke="#999" />
        </svg>
        <span className="ml-[21px] text-[#35a60b]">
          https://<span className="text-black">mp.csdn.net</span>
        </span>
        <button aria-label="菜单" className="ml-auto mr-4 w-5 h-[17px] border-y-2 border-[#555] flex items-center">
          <span className="w-full h-px bg-[#333]" />
        </button>
      </div>
      <div className="h-[36px] shrink-0 bg-white border-b border-[#e6e6e6] flex items-center pl-[18px] text-[15px] text-[#333] whitespace-nowrap overflow-hidden">
        <svg viewBox="0 0 20 20" className="size-5 shrink-0">
          <path d="M10 0l3 7 7 .5-5.500 4.500 2 7.500L10 15.500 3.500 19.500l2-7.500L0 7.500 7 7z" fill="#ff9500" />
        </svg>
        <a href="#bookmarks" className="ml-[10px]">书签</a>
        <span className="ml-[11px] h-5 border-l-2 border-[#ddd]" />
        <svg viewBox="0 0 16 18" className="ml-[13px] w-4 h-[18px]" fill="#2e3ce0">
          <ellipse cx="5" cy="3" rx="2" ry="3" />
          <ellipse cx="11" cy="3" rx="2" ry="3" />
          <ellipse cx="2" cy="8" rx="2" ry="2.500" />
          <ellipse cx="14" cy="8" rx="2" ry="2.500" />
          <path d="M8 7c3 0 4 4 6 5s1 5-2 5H4c-3 0-4-4-2-5s3-5 6-5z" />
          <path d="M5 12v3M7 12v3h3v-3" stroke="#fff" fill="none" />
        </svg>
        <a href="#baidu" className="ml-[9px] mr-4">百度一下</a>
        <Globe />
        <a href="#nav" className="ml-[7px] mr-4">网址导航</a>
        <Globe />
        <a href="#edu" className="ml-[7px]">全国大学生</a>
        <svg viewBox="0 0 11 9" className="ml-auto mr-[19px] w-[11px] h-[9px]" fill="none" stroke="#777" strokeWidth="1.200">
          <path d="M1 0l4 4.500L1 9M6 0l4 4.500L6 9" />
        </svg>
      </div>
      <div className="flex-1 min-h-0 flex">
        <div className="flex-1 min-w-0 flex flex-col">
          <div className="h-[84px] shrink-0 bg-white flex items-center pl-[42px] overflow-hidden">
            <svg viewBox="0 0 46 38" className="w-[46px] h-[38px] -mt-0.5">
              <circle cx="5" cy="20" r="5" fill="#e99a6c" />
              <circle cx="41" cy="20" r="5" fill="#e99a6c" />
              <path d="M23 0c-3 1-5 2-8 4C6 8 5 17 6 24c1 8 8 14 17 14s16-6 17-14c1-8-1-16-9-20-2-2-4-3-8-4z" fill="#813128" />
              <path d="M23 14c-4-5-14-2-13 6 0 2 1 4 2 5-2 6 3 13 11 13s13-7 11-13c1-1 2-3 2-5 1-8-9-11-13-6z" fill="#f2b98a" />
              <circle cx="16" cy="18" r="5" fill="#c98c62" stroke="#333" strokeWidth="1.300" />
              <circle cx="30" cy="18" r="5" fill="#c98c62" stroke="#333" strokeWidth="1.300" />
              <circle cx="16" cy="18" r="2" fill="#222" />
              <circle cx="30" cy="18" r="2" fill="#222" />
              <path d="M20 25h1M25 25h1" stroke="#813128" strokeWidth="2" />
              <path d="M20 33q3 2 6 0" stroke="#e2607a" strokeWidth="2" fill="none" />
            </svg>
            <span className="ml-[3px] w-[95px] text-[36px] leading-10 italic font-medium text-[#3c3c38]">
              <span className="text-[#fc5531]">C</span>SDN
            </span>
            <svg viewBox="0 0 12 22" className="ml-[119px] w-3 h-[22px]" fill="none" stroke="#222" strokeWidth="1.600">
              <path d="M11 0L1 11l10 11" />
            </svg>
            <h1 className="ml-[25px] text-[31px] font-bold text-[#222226] whitespace-nowrap">发布文章</h1>
            <span className="ml-auto w-[120px] h-[63px] bg-[radial-gradient(circle_at_76%_55%,#f0406a_0%,#9c1462_14%,#35154f_22%,#121848_60%)]" />
          </div>
          <div className="h-[93px] shrink-0 bg-[#f4f4f4] border-b border-[#e8e9ec] flex items-start pl-[69px] pt-4 text-[21px] text-[#555666] overflow-hidden">
            <button className="flex flex-col items-center w-[44px]">
              <svg viewBox="0 0 30 30" className="size-[29px]" fill="none" stroke="#555666" strokeWidth="3.400" strokeLinecap="round">
                <path d="M3 3v7h7M4 9a12.500 12.500 0 1 1 0 13" />
              </svg>
              <span className="mt-1.5 leading-8">撤消</span>
            </button>
            <button className="ml-[43px] flex flex-col items-center w-[44px]">
              <svg viewBox="0 0 30 30" className="size-[29px]" fill="none" stroke="#b6b6bd" strokeWidth="3.400" strokeLinecap="round">
                <path d="M27 3v7h-7M26 9a12.500 12.500 0 1 0 0 13" />
              </svg>
              <span className="mt-1.5 leading-8">重做</span>
            </button>
            <span className="ml-[34px] mt-4 h-[31px] border-l-2 border-[#dcdcdf]" />
            <button className="ml-[33px] flex flex-col w-[44px]">
              <svg viewBox="0 0 44 30" className="w-[44px] h-[29px]" stroke="#555666" strokeWidth="3.400" strokeLinecap="round">
                <path d="M2 2v26M18 2v26M2 15h16" />
                <path d="M32 12h9l-4.500 5z" fill="#555666" stroke="none" />
              </svg>
              <span className="mt-1.5 leading-8">标题</span>
            </button>
            <button className="ml-[40px] flex flex-col w-[60px]">
              <svg viewBox="0 0 44 30" className="ml-3 w-[44px] h-[29px]" stroke="#555666" strokeWidth="3.400" fill="none">
                <path d="M2 2v26h10c9 0 9-13 0-13H2h10c8 0 8-13 0-13z" />
              </svg>
              <span className="mt-1.5 leading-8">加粗</span>
            </button>
            <span className="ml-auto mr-[21px] mt-[36px] text-[#4a5578]">目录</span>
          </div>
          <div className="flex-1 min-h-0 flex justify-end bg-[#f5f6f8]">
            <div className="w-[60px] bg-[#fdfdfd] flex flex-col items-end">
              <div className="h-[58px] w-full border-b border-[#e8e8e8]" />
              <div className="h-[70px] w-full shadow-md pt-5 pr-5">
                <span className="ml-auto block size-[26px] rounded-full bg-[#e5193c]" />
              </div>
              <div className="mt-[122px] size-[72px] rounded-full bg-white shadow-md flex items-center justify-center">
                <svg viewBox="0 0 36 36" className="size-9" fill="none" stroke="#8a8ba0" strokeWidth="4">
                  <path d="M3 3h11v11H3zM22 3h11v11H22zM3 22h11v11H3zM20 22h4v11M27 24h8M33 28v8" />
                </svg>
              </div>
              <div className="mt-4 size-[72px] rounded-full bg-white shadow-md flex items-center justify-center">
                <svg viewBox="0 0 36 36" className="size-9" fill="none" stroke="#8a8ba0" strokeWidth="3">
                  <path d="M5 18a13 13 0 0 1 26 0M3 18h6v10H3zM27 18h6v10h-6zM31 28c-2 5-8 6-11 6" />
                </svg>
              </div>
            </div>
          </div>
          <div className="h-[118px] shrink-0 bg-white border-t border-[#e2e3e6] flex items-center gap-[43px] pl-[152px] pb-2 text-[24px] text-[#555666] whitespace-nowrap overflow-hidden">
            <span>共 535 字</span>
            <span className="text-[#222226]">发文设置</span>
          </div>
        </div>
        <div className="w-[21px] shrink-0 bg-[#f1f1f1] flex flex-col items-center">
          <span className="mt-[9px] border-x-[5px] border-x-transparent border-b-[5px] border-b-[#505050]" />
          <span className="mt-[100px] w-[17px] h-[223px] bg-[#c1c1c1]" />
          <span className="mt-auto mb-[9px] border-x-[5px] border-x-transparent border-t-[5px] border-t-[#505050]" />
        </div>
      </div>
      <div className="h-5 shrink-0 bg-[#f1f1f1] flex items-center">
        <span className="ml-2 mr-2 border-y-[5px] border-y-transparent border-r-[5px] border-r-[#a3a3a3]" />
        <span className="w-[1400px] h-[17px] bg-[#c1c1c1]" />
        <span className="ml-auto mr-2 border-y-[5px] border-y-transparent border-l-[5px] border-l-[#505050]" />
        <span className="w-[21px] h-full bg-[#dcdcdc]" />
      </div>
    </div>
  );
}

function QBrowserIcon() {
  return (
    <svg viewBox="0 0 30 30" className="size-[29px] shrink-0">
      <circle cx="14" cy="14" r="11" fill="none" stroke="#1b8cf5" strokeWidth="5.500" />
      <path d="M5 8A11 11 0 0 1 24 10" fill="none" stroke="#3fb4f5" strokeWidth="5" />
      <path d="M16 29a4 4 0 0 1 0-8 5 5 0 0 1 9-1 4.500 4.500 0 0 1 2 9z" fill="#fff" />
    </svg>
  );
}

const tasks: { label: string; cls: string; icon: ReactNode }[] = [
  {
    label: "登录界面 - ...",
    cls: "ml-[18px] w-[143px] pl-1.5",
    icon: (
      <svg viewBox="0 0 30 30" className="size-[30px] shrink-0">
        <path d="M21 0l9 4v22l-9 4z" fill="#b88af0" />
        <path d="M0 8l3-1 18 16v7L0 11zM0 22l3 1L21 7V0L0 19z" fill="#8b4bd0" />
        <path d="M0 8l3-1v16l-3-1z" fill="#6a2fae" />
      </svg>
    ),
  },
  {
    label: "我的Androi...",
    cls: "ml-[11px] w-[143px] pl-1.5",
    icon: (
      <svg viewBox="0 0 30 30" className="size-[30px] shrink-0">
        <circle cx="15" cy="15" r="15" fill="#1d7cd0" />
        <rect x="8" y="4" width="14" height="22" rx="2" fill="#2f93e8" stroke="#fff" strokeWidth="1.500" />
        <path d="M8 23h14v3H8z" fill="#fff" />
      </svg>
    ),
  },
  { label: "写文章-CSD...", cls: "ml-[11px] w-[143px] pl-1.5", icon: <QBrowserIcon /> },
  { label: "Qt 设计师 - ...", cls: "ml-[5px] w-[153px] pl-3 bg-[#5a5658]", icon: <QtLogo className="size-[28px] shrink-0" /> },
];

function Taskbar() {
  return (
    <footer className="relative h-[50px] shrink-0 flex items-center bg-linear-to-r from-[#393130] via-[#40352f] via-60% to-[#26282b] text-white text-[16px] whitespace-nowrap">
      <button aria-label="开始" className="w-[60px] flex justify-center">
        <svg viewBox="0 0 20 20" className="size-5" fill="#fff">
          <path d="M0 3l9-1v7.500H0zM10 2l10-2v9.500H10zM0 10.500h9V18l-9-1zM10 10.500h10V20l-10-2z" />
        </svg>
      </button>
      <label className="relative w-[360px] h-full flex items-center bg-[#f2f2f2] border border-[#c4c4c4] text-[#333] pl-3.5 overflow-hidden">
        <svg viewBox="0 0 22 22" className="size-[22px]" fill="none" stroke="#222" strokeWidth="1.700">
          <circle cx="14" cy="8" r="6.500" />
          <path d="M9 13l-8 8" />
        </svg>
        <input aria-label="搜索" placeholder="搜索" className="ml-3 w-[180px] text-[19px] placeholder:text-[#333] outline-none" />
        <svg viewBox="0 0 92 46" className="absolute right-1.5 bottom-0 w-[92px] h-[46px]">
          <path d="M46 3C32-4 18 4 14 16L5 19l6 4-10 5 7 3-6 6 6 2-3 7h14c-2-20 10-30 26-34z" fill="#b9252b" />
          <path d="M44 3c-14 0-24 8-28 18" stroke="#f08050" strokeWidth="3" fill="none" />
          <path d="M18 46c0-24 14-34 30-34s30 10 32 34z" fill="#a2a3a1" />
          <path d="M25 46c0-16 10-28 24-28s24 10 26 28z" fill="#c9c9c4" />
          <path d="M29 46c2-14 13-15 20-7 7-8 18-7 20 7z" fill="#8d4a28" />
          <path d="M33 46c2-11 10-11 16-4 6-7 14-7 16 4z" fill="#f0a878" />
          <circle cx="46" cy="9" r="6" fill="#e2e2de" />
          <path d="M42 12h8v14h-8z" fill="#bcbcb8" />
          <ellipse cx="47" cy="30" rx="4" ry="5" fill="#aaa" stroke="#777" />
          <circle cx="37" cy="32" r="2.500" fill="#888" />
          <circle cx="58" cy="32" r="2.500" fill="#888" />
          <path d="M76 46c2-10 4-16 12-22-2 6 0 9-2 11h5l-4 5h4l-6 6z" fill="#8b8b88" />
          <path d="M18 46c-1-8-6-12-12-14 2 6 4 10 8 14z" fill="#8b8b88" />
        </svg>
      </label>
      <button aria-label="任务视图" className="ml-5">
        <svg viewBox="0 0 20 20" className="size-5" fill="none" stroke="#fff" strokeWidth="1.500">
          <path d="M1 0v4h12V0M1 20v-4h12v4M1 7h12v6H1zM18 0v5M18 8v3M18 14v6" />
        </svg>
      </button>
      <button aria-label="商店" className="ml-[37px]">
        <svg viewBox="0 0 29 30" className="w-[29px] h-[30px]">
          <path d="M8 8V2h13v6" fill="none" stroke="#22b2f0" strokeWidth="2.500" />
          <path d="M0 5h29v21a3 3 0 0 1-3 3H3a3 3 0 0 1-3-3z" fill="#f2f2f2" />
          <path d="M9 11h5v5H9z" fill="#f25022" />
          <path d="M15 11h5v5h-5z" fill="#7fba00" />
          <path d="M9 17h5v5H9z" fill="#00a4ef" />
          <path d="M15 17h5v5h-5z" fill="#ffb900" />
        </svg>
      </button>
      <button aria-label="文件资源管理器" className="ml-[30px]">
        <svg viewBox="0 0 28 24" className="w-7 h-6">
          <path d="M0 1h11l3 4H0z" fill="#d99b0b" />
          <path d="M0 4h28v18H0z" fill="#fbd15b" />
          <path d="M5 24v-9l2-3h14l2 3v9h-5v-6h-8v6z" fill="#2f88d8" />
        </svg>
      </button>
      <button aria-label="百度网盘" className="ml-[29px]">
        <svg viewBox="0 0 30 30" className="size-[30px]">
          <rect width="30" height="30" rx="6" fill="#fff" />
          <circle cx="9.500" cy="17" r="4.500" fill="none" stroke="#2da0f5" strokeWidth="3" />
          <circle cx="20.500" cy="17" r="4.500" fill="none" stroke="#2da0f5" strokeWidth="3" />
          <circle cx="15" cy="10" r="4" fill="none" stroke="#ee4d5f" strokeWidth="3" />
          <path d="M10 29h5" stroke="#e45" strokeWidth="2" />
          <path d="M15 29h5" stroke="#2da0f5" strokeWidth="2" />
        </svg>
      </button>
      <button aria-label="QQ浏览器" className="ml-[27px]">
        <QBrowserIcon />
      </button>
      <button aria-label="迅雷" className="ml-[27px]">
        <svg viewBox="0 0 30 30" className="size-[30px]">
          <rect width="30" height="30" rx="5" fill="#4088ff" />
          <path d="M4 6c5 2 8 4 11 6 1-4 4-7 7-8l-1 4 5 3-4 1c0 6-5 8-4 14-2-1-4-3-4-6-4 0-6-2-8-5l5 1c-4-3-6-6-7-10z" fill="#fff" />
        </svg>
      </button>
      {tasks.map((t) => (
        <button key={t.label} className={`h-full flex items-center gap-[3px] border-b-3 border-[#76b9ed] ${t.cls}`}>
          {t.icon}
          <span className="truncate">{t.label}</span>
        </button>
      ))}
      <svg viewBox="0 0 22 22" className="ml-[12px] size-5 shrink-0">
        <path d="M1 4l17-4 3 17-17 5z" fill="#ef5a28" />
        <path d="M15 6c-5-2-9 0-7 3s8 1 7 5-7 3-9 2" fill="none" stroke="#fff" strokeWidth="3" />
      </svg>
      <div className="ml-auto flex items-center pr-[6px]">
        <svg viewBox="0 0 28 28" className="size-7 shrink-0">
          <circle cx="13" cy="15" r="12.500" fill="#f0821e" />
          <path d="M3 7a12.500 12.500 0 0 1 20 0C18 14 8 18 1 17c0-4 0-7 2-10z" fill="#f3a733" />
          <circle cx="24" cy="4" r="3.500" fill="#c42b1c" />
        </svg>
        <span className="ml-[12px] text-[18px] w-[71px]">15°C</span>
        <svg viewBox="0 0 180 22" className="w-[180px] h-[22px] shrink-0" fill="none" stroke="#fff" strokeWidth="1.500">
          <path d="M1 15l7.500-7.500L16 15" />
          <path d="M31 6h16v10H33v-6M48 9v4" />
          <path d="M34 8h11v6H35z" fill="#fff" stroke="none" />
          <path d="M28 3v3M31 3v3M27 6h5v3l-2 2h-2zM29 10v5h4" strokeWidth="1.200" />
          <path d="M62 18A14 14 0 0 1 76 4" stroke="#888" />
          <path d="M66 18a10 10 0 0 1 10-10M70 18a6 6 0 0 1 6-6" />
          <circle cx="75" cy="17" r="1.800" fill="#fff" stroke="none" />
          <path d="M89 8h3l5-5v16l-5-5h-3zM100 8q2 3 0 6" />
          <path d="M103 6q3 5 0 10M106 4q4 7 0 14" stroke="#888" />
          <ellipse cx="127" cy="11" rx="6" ry="8" fill="#111" stroke="none" />
          <ellipse cx="127" cy="15" rx="6" ry="5" fill="#ff2fa0" stroke="none" />
          <path d="M124 8h6M122 20h8" stroke="#ffb32a" strokeWidth="2.500" />
          <path d="M130 2l5 4M135 1l-4 5" stroke="#ff1d96" strokeWidth="2.500" />
          <circle cx="133" cy="16" r="5.500" fill="#ff9a52" stroke="none" />
          <path d="M130 15h6M130 18h6" />
          <path d="M150 4h29v16h-29z" />
          <path d="M153 8h24M153 12h24" strokeDasharray="2 2" />
          <path d="M157 16h15M153 16h2M174 16h3" />
        </svg>
        <time className="ml-[6px] w-[90px] text-center text-[15px] leading-[23px]">
          19:18
          <br />
          2023/3/24
        </time>
        <button aria-label="通知" className="ml-[17px] mr-[14px]">
          <svg viewBox="0 0 30 32" className="w-[30px] h-8">
            <path d="M0 1h20v17h-8l-5 4v-4H0z" fill="#fff" />
            <path d="M4 6h12M4 9h12M4 13h12" stroke="#333" />
            <circle cx="20" cy="20" r="10" fill="#3a3a3c" stroke="#777" />
            <text x="16" y="26" fontSize="15" fontFamily="Open Sans" fill="#fff">2</text>
          </svg>
        </button>
        <span className="h-[50px] border-l border-[#777]" />
      </div>
      <span className="absolute right-4 bottom-[7px] text-[14px] text-white/60">CSDN @肚肚杨</span>
    </footer>
  );
}

export default function App() {
  return (
    <div className="relative h-screen flex flex-col overflow-hidden [font-family:'Noto_Sans','Noto_Sans_CJK_SC',sans-serif]">
      <div className="relative flex-1 min-h-0 flex">
        <Sidebar />
        <Browser />
        <QtDesigner />
        <ContextMenu />
      </div>
      <Taskbar />
    </div>
  );
}
